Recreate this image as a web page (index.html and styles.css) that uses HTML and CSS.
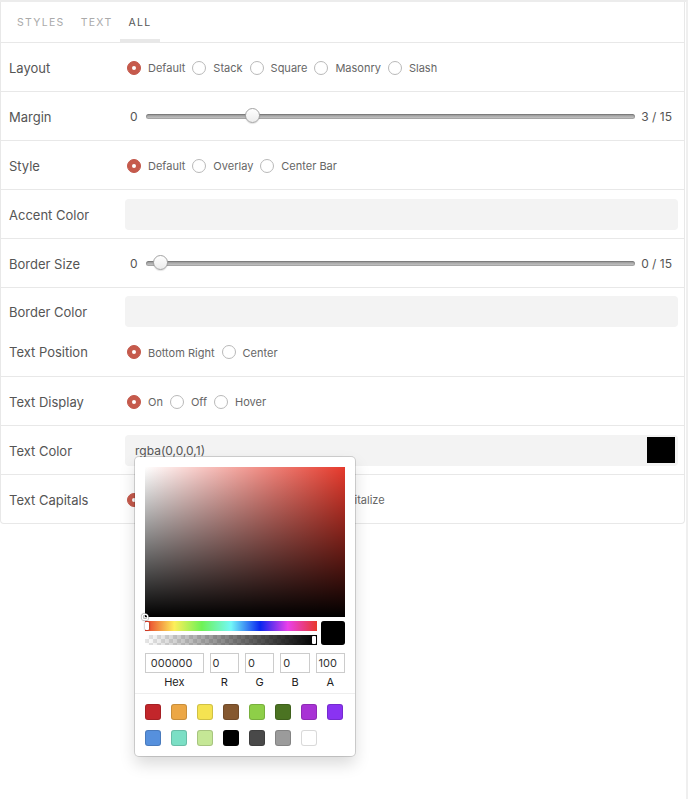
FILE: index.html
```html
<!DOCTYPE html>
<html>
<head>
<meta charset="utf-8">
<link rel="stylesheet" href="styles.css">
</head>
<body>
<div class="page">
  <div class="panel">
    <div class="tabs">
      <div class="tab">STYLES</div>
      <div class="tab">TEXT</div>
      <div class="tab active">ALL</div>
    </div>

    <div class="row">
      <div class="label">Layout</div>
      <div class="control">
        <span class="opt"><span class="radio on"></span><span class="otext">Default</span></span>
        <span class="opt"><span class="radio"></span><span class="otext">Stack</span></span>
        <span class="opt"><span class="radio"></span><span class="otext">Square</span></span>
        <span class="opt"><span class="radio"></span><span class="otext">Masonry</span></span>
        <span class="opt"><span class="radio"></span><span class="otext">Slash</span></span>
      </div>
    </div>

    <div class="row">
      <div class="label">Margin</div>
      <div class="control">
        <span class="smin">0</span>
        <div class="track"><span class="thumb" style="left: calc(7px + (100% - 29px) * 0.2)"></span></div>
        <span class="smax">3 / 15</span>
      </div>
    </div>

    <div class="row">
      <div class="label">Style</div>
      <div class="control">
        <span class="opt"><span class="radio on"></span><span class="otext">Default</span></span>
        <span class="opt"><span class="radio"></span><span class="otext">Overlay</span></span>
        <span class="opt"><span class="radio"></span><span class="otext">Center Bar</span></span>
      </div>
    </div>

    <div class="row">
      <div class="label">Accent Color</div>
      <div class="control"><div class="colorbox"></div></div>
    </div>

    <div class="row">
      <div class="label">Border Size</div>
      <div class="control">
        <span class="smin">0</span>
        <div class="track"><span class="thumb" style="left: calc(7px + (100% - 29px) * 0)"></span></div>
        <span class="smax">0 / 15</span>
      </div>
    </div>

    <div class="row row-open">
      <div class="label">Border Color</div>
      <div class="control"><div class="colorbox"></div></div>
    </div>

    <div class="row row-tall">
      <div class="label">Text Position</div>
      <div class="control">
        <span class="opt"><span class="radio on"></span><span class="otext">Bottom Right</span></span>
        <span class="opt"><span class="radio"></span><span class="otext">Center</span></span>
      </div>
    </div>

    <div class="row">
      <div class="label">Text Display</div>
      <div class="control">
        <span class="opt"><span class="radio on"></span><span class="otext">On</span></span>
        <span class="opt"><span class="radio"></span><span class="otext">Off</span></span>
        <span class="opt"><span class="radio"></span><span class="otext">Hover</span></span>
      </div>
    </div>

    <div class="row">
      <div class="label">Text Color</div>
      <div class="control">
        <div class="colorbox">
          <span class="colortext">rgba(0,0,0,1)</span>
          <span class="colorswatch"></span>
        </div>
      </div>
    </div>

    <div class="row row-last">
      <div class="label">Text Capitals</div>
      <div class="control">
        <span class="opt"><span class="radio on"></span><span class="otext">Default</span></span>
        <span class="opt"><span class="radio"></span><span class="otext">Upper</span></span>
        <span class="opt"><span class="radio"></span><span class="otext">Lower</span></span>
        <span class="opt"><span class="radio"></span><span class="otext">Capitalize</span></span>
      </div>
    </div>
  </div>

  <div class="picker">
    <div class="sat"><span class="sat-ptr"></span></div>
    <div class="controls">
      <div class="bars">
        <div class="hue"><span class="hue-ptr"></span></div>
        <div class="alpha"><span class="alpha-ptr"></span></div>
      </div>
      <div class="preview"></div>
    </div>
    <div class="fields">
      <div class="field hex"><div class="finput">000000</div><div class="flabel">Hex</div></div>
      <div class="field"><div class="finput">0</div><div class="flabel">R</div></div>
      <div class="field"><div class="finput">0</div><div class="flabel">G</div></div>
      <div class="field"><div class="finput">0</div><div class="flabel">B</div></div>
      <div class="field"><div class="finput">100</div><div class="flabel">A</div></div>
    </div>
    <div class="presets">
      <span class="sw c1"></span><span class="sw c2"></span><span class="sw c3"></span><span class="sw c4"></span>
      <span class="sw c5"></span><span class="sw c6"></span><span class="sw c7"></span><span class="sw c8"></span>
      <span class="sw c9"></span><span class="sw c10"></span><span class="sw c11"></span><span class="sw c12"></span>
      <span class="sw c13"></span><span class="sw c14"></span><span class="sw c15"></span>
    </div>
  </div>
</div>
</body>
</html>
```

FILE: styles.css
```css
html, body {
  margin: 0;
  background: #fff;
}
body {
  font-family: Inter, "Liberation Sans", sans-serif;
}
.page {
  position: relative;
  width: 686px;
  min-height: 797px;
  border-top: 2px solid #ececec;
  border-right: 2px solid #efefef;
}
.panel {
  margin-right: 1px;
  border: 1px solid #e8e8e8;
  border-top: none;
  border-radius: 0 0 4px 4px;
}
.tabs {
  display: flex;
  height: 40px;
  padding-left: 8px;
  border-bottom: 1px solid #e8e8e8;
}
.tab {
  position: relative;
  display: flex;
  align-items: center;
  padding: 0 8px;
  font-size: 10.5px;
  letter-spacing: 1.3px;
  color: #aaa;
}
.tab.active {
  color: #555;
}
.tab.active::after {
  content: "";
  position: absolute;
  left: 0;
  right: 0;
  bottom: 0;
  height: 3px;
  background: #e8e8e8;
}
.row {
  display: flex;
  align-items: center;
  height: 48px;
  padding: 0 6px 0 8px;
  border-bottom: 1px solid #e8e8e8;
}
.row-open {
  height: 31px;
  padding-top: 8px;
  border-bottom: none;
}
.row-tall {
  height: 49px;
}
.row-last {
  border-bottom: none;
}
.label {
  flex: none;
  width: 116px;
  padding-top: 1px;
  font-size: 13px;
  color: #555;
}
.control {
  flex: 1;
  display: flex;
  align-items: center;
  min-width: 0;
}
.opt {
  display: inline-flex;
  align-items: center;
}
.radio {
  box-sizing: border-box;
  width: 14px;
  height: 14px;
  margin: 1px 7px 0 2px;
  border-radius: 50%;
  border: 1px solid #b9b9b9;
  background: #fff;
  display: inline-flex;
  align-items: center;
  justify-content: center;
}
.radio.on {
  border-color: #c2574a;
  background: #c65a4c;
}
.radio.on::after {
  content: "";
  width: 4px;
  height: 4px;
  border-radius: 50%;
  background: #fff;
}
.otext {
  margin-right: 5px;
  padding-top: 2px;
  font-size: 11px;
  color: #666;
}
.smin {
  margin: 0 8px 0 5px;
  font-size: 12px;
  color: #555;
}
.smax {
  margin: 0 6px 0 6px;
  font-size: 12px;
  color: #555;
}
.track {
  position: relative;
  flex: 1;
  height: 5px;
  border-radius: 3px;
  background: linear-gradient(#8a8a8a, #b8b8b8 60%, #c6c6c6);
  box-shadow: inset 0 0 0 1px rgba(0, 0, 0, 0.15);
}
.thumb {
  position: absolute;
  top: -6px;
  box-sizing: border-box;
  width: 15px;
  height: 15px;
  border-radius: 50%;
  border: 1px solid #a3a3a3;
  background: linear-gradient(#ffffff, #ececec);
  box-shadow: 0 1px 1px rgba(0, 0, 0, 0.12);
}
.colorbox {
  flex: 1;
  height: 31px;
  border-radius: 4px;
  background: #f3f3f3;
  display: flex;
  align-items: center;
  justify-content: space-between;
}
.colortext {
  padding-left: 10px;
  padding-top: 1px;
  font-size: 12px;
  color: #555;
}
.colorswatch {
  width: 28px;
  height: 26px;
  margin-right: 3px;
  background: #000;
}

/* colour picker popover */
.picker {
  position: absolute;
  left: 135px;
  top: 455px;
  width: 200px;
  padding: 10px 10px 0;
  background: #fff;
  border-radius: 4px;
  box-shadow: 0 0 0 1px rgba(0, 0, 0, 0.15), 0 8px 16px rgba(0, 0, 0, 0.15);
}
.sat {
  position: relative;
  height: 150px;
  background:
    linear-gradient(to top, #000, rgba(0, 0, 0, 0)),
    linear-gradient(to right, #fff, rgba(255, 255, 255, 0)),
    #e63a2c;
}
.sat-ptr {
  position: absolute;
  left: 0;
  bottom: 0;
  width: 4px;
  height: 4px;
  border-radius: 50%;
  transform: translate(-2px, 2px);
  box-shadow: 0 0 0 1.5px #fff, inset 0 0 1px 1px rgba(0, 0, 0, 0.3), 0 0 1px 2px rgba(0, 0, 0, 0.4);
}
.controls {
  display: flex;
  margin-top: 4px;
}
.bars {
  flex: 1;
}
.hue {
  position: relative;
  height: 10px;
  background: linear-gradient(to right, #e8392b 0%, #fdef5a 17%, #6ef255 33%, #72f8f8 50%, #0a26f0 67%, #ea40ea 83%, #e8392b 100%);
}
.alpha {
  position: relative;
  height: 10px;
  margin-top: 4px;
  background:
    linear-gradient(to right, rgba(0, 0, 0, 0), #000),
    conic-gradient(#e6e6e6 0 25%, #fff 0 50%, #e6e6e6 0 75%, #fff 0) 0 0 / 8px 8px;
}
.hue-ptr,
.alpha-ptr {
  position: absolute;
  top: 1px;
  width: 4px;
  height: 8px;
  border-radius: 1px;
  background: #fff;
  box-shadow: 0 0 2px rgba(0, 0, 0, 0.6);
}
.hue-ptr {
  left: 0;
}
.alpha-ptr {
  right: 1px;
}
.preview {
  width: 24px;
  height: 24px;
  margin-left: 4px;
  border-radius: 3px;
  background: #000;
  box-shadow: inset 0 0 0 1px rgba(0, 0, 0, 0.15), inset 0 0 4px rgba(0, 0, 0, 0.25);
}
.fields {
  display: flex;
  padding-top: 8px;
}
.field {
  flex: 1;
  padding-left: 6px;
  min-width: 0;
}
.field.hex {
  flex: 2;
  padding-left: 0;
}
.finput {
  height: 20px;
  padding-left: 10%;
  display: flex;
  align-items: center;
  font-size: 11px;
  color: #333;
  box-shadow: inset 0 0 0 1px #ccc;
}
.flabel {
  padding: 3px 0 4px;
  line-height: 13px;
  text-align: center;
  font-size: 11px;
  color: #222;
}
.presets {
  display: flex;
  flex-wrap: wrap;
  margin: 0 -10px;
  padding: 10px 0 0 10px;
  border-top: 1px solid #eee;
}
.sw {
  width: 16px;
  height: 16px;
  margin: 0 10px 10px 0;
  border-radius: 3px;
  box-shadow: inset 0 0 0 1px rgba(0, 0, 0, 0.15);
}
.c1 { background: #c2262b; }
.c2 { background: #eca745; }
.c3 { background: #f5e351; }
.c4 { background: #85582f; }
.c5 { background: #8ecf48; }
.c6 { background: #4b7322; }
.c7 { background: #a832d5; }
.c8 { background: #8a33f2; }
.c9 { background: #5690dd; }
.c10 { background: #7bdfc5; }
.c11 { background: #c5e796; }
.c12 { background: #000000; }
.c13 { background: #494949; }
.c14 { background: #9b9b9b; }
.c15 { background: #ffffff; }
```
